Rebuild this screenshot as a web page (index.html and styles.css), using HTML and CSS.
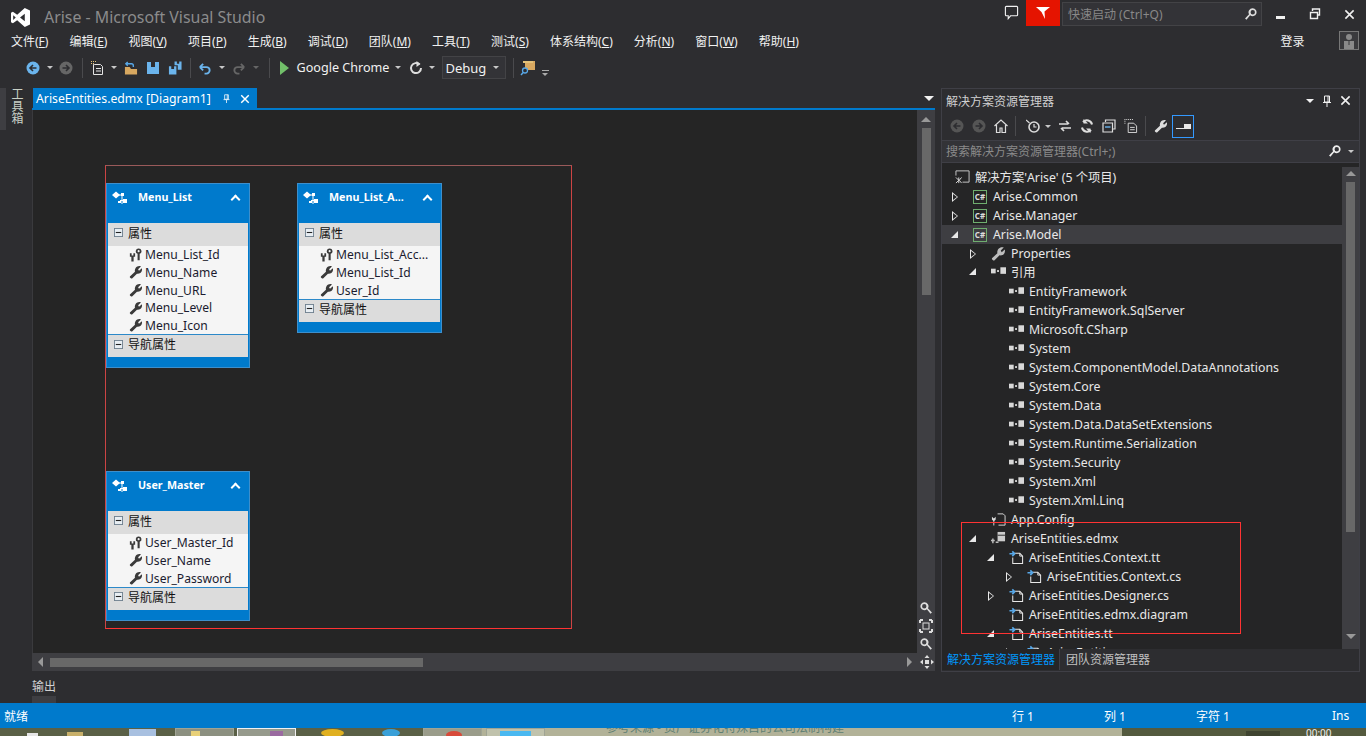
FILE: index.html
```html
<!DOCTYPE html>
<html lang="zh-CN">
<head>
<meta charset="utf-8">
<title>Arise - Microsoft Visual Studio</title>
<link rel="stylesheet" href="styles.css">
</head>
<body>
<svg class="sprite" aria-hidden="true">
  <symbol id="wrench" viewBox="0 0 16 16"><path d="M1 13 6.800 7.800C6.200 4.600 8.300 1.200 11.800 1.200c.8 0 1.300.1 1.800.4L10.400 4.800l1 1.900 3.300-2.900c1 3.400-1.800 7-5.600 6.100L3.500 15.500H2.500L1 14.200Z" fill="currentColor"/></symbol>
  <symbol id="key" viewBox="0 0 16 16"><path d="M11 .5a3.200 3.200 0 0 1 1.200 6.200V14h-2.400V6.700A3.200 3.200 0 0 1 11 .5Zm0 1.900a1.200 1.200 0 1 0 0 2.400 1.200 1.200 0 0 0 0-2.400Z" fill="currentColor" fill-rule="evenodd"/><path d="M1 6h2v2.500h2V6h2v4H5.300v5.500H2.700V10H1Z" fill="currentColor"/></symbol>
  <symbol id="entity" viewBox="0 0 16 16"><path d="M0 5 4 1.500 8 5 4 8.500Z M9 3h3v3H9Z M11 9h4v4h-4Z M6 11h3v2H6Z" fill="currentColor"/><path d="M10 5.500V14M6 5l5 0M8 10.500h4" stroke="currentColor" fill="none"/></symbol>
  <symbol id="collapse" viewBox="0 0 10 10"><rect x=".5" y=".5" width="9" height="9" fill="#e8eef3" stroke="#6e7f8e"/><path d="M2 5h6" stroke="#222" stroke-width="1.200"/></symbol>
  <symbol id="search" viewBox="0 0 16 16"><path d="M10 1.500a4.500 4.500 0 1 1-3 8L2.800 14.500 1.200 13 5.800 8.300A4.500 4.500 0 0 1 10 1.500Zm0 2a2.500 2.500 0 1 0 0 5 2.500 2.500 0 0 0 0-5Z" fill="currentColor" fill-rule="evenodd"/></symbol>
  <symbol id="filearrow" viewBox="0 0 16 16"><path d="M6 3.500h5.500l3 3v8H4V8" fill="none" stroke="#e8e8e8" stroke-width="1.100"/><path d="M11.500 3.500v3h3" fill="none" stroke="#e8e8e8"/><path d="M.5 4h5M3.500 1.500 6 4 3.500 6.500" fill="none" stroke="#58a8e8" stroke-width="1.800"/></symbol>
  <symbol id="ref" viewBox="0 0 16 16"><rect x="0" y="5" width="5" height="5" fill="#d8d8d8"/><rect x="6.500" y="6.500" width="2" height="2" fill="#d8d8d8"/><rect x="10" y="3.500" width="6" height="7" fill="#d8d8d8"/></symbol>
  <symbol id="circle-left" viewBox="0 0 14 14"><circle cx="7" cy="7" r="6.500" fill="currentColor"/><path d="M10.500 7h-6M7 4 4 7l3 3" fill="none" stroke="#2d2d30" stroke-width="1.600"/></symbol>
  <symbol id="circle-right" viewBox="0 0 14 14"><circle cx="7" cy="7" r="6.500" fill="currentColor"/><path d="M3.500 7h6M7 4l3 3-3 3" fill="none" stroke="#2d2d30" stroke-width="1.600"/></symbol>
  <symbol id="pin" viewBox="0 0 12 12"><path d="M3.500 1h5v6h-5ZM2 7.500h8M6 8v4M7 1v6" fill="none" stroke="currentColor"/></symbol>
  <symbol id="close" viewBox="0 0 12 12"><path d="m1.500 1.500 9 9m0-9-9 9" stroke="currentColor" stroke-width="1.700" fill="none"/></symbol>
</svg>

<div class="app">
  <header class="titlebar">
    <svg class="logo" viewBox="0 0 20 20"><path fill="#fff" fill-rule="evenodd" d="M14.500 0 20 2.600V17.400L14.500 20 6.500 12.800 2 16 0 15V5L2 4 6.500 7.200ZM14.500 6 9.500 10 14.500 14ZM2.300 7.500V12.500L5 10Z"/></svg>
    <div class="apptitle">Arise - Microsoft Visual Studio</div>
    <svg class="feedback" viewBox="0 0 16 16"><path d="M2.500 1.500h11a1 1 0 0 1 1 1v8a1 1 0 0 1-1 1H7l-2.500 3v-3h-2a1 1 0 0 1-1-1v-8a1 1 0 0 1 1-1Z" fill="none" stroke="#f0f0f0" stroke-width="1.200"/></svg>
    <div class="flag"><svg viewBox="0 0 14 14" width="14" height="14"><path d="M0 1h14L8.500 5.500 9 13 5.500 6Z" fill="#fff"/></svg></div>
    <div class="quick"><span>快速启动 (Ctrl+Q)</span><svg class="i14"><use href="#search"/></svg></div>
    <div class="winbtns">
      <span class="winmin"></span>
      <svg class="winrestore" viewBox="0 0 12 12"><path d="M3.500 3V1h7v6H8.500M1.500 4.500h7v6h-7Z" fill="none" stroke="#f0f0f0" stroke-width="1.400"/></svg>
      <svg class="winclose"><use href="#close"/></svg>
    </div>
  </header>

  <nav class="menubar">
    <span>文件(<u>F</u>)</span><span>编辑(<u>E</u>)</span><span>视图(<u>V</u>)</span><span>项目(<u>P</u>)</span><span>生成(<u>B</u>)</span><span>调试(<u>D</u>)</span><span>团队(<u>M</u>)</span><span>工具(<u>T</u>)</span><span>测试(<u>S</u>)</span><span>体系结构(<u>C</u>)</span><span>分析(<u>N</u>)</span><span>窗口(<u>W</u>)</span><span>帮助(<u>H</u>)</span>
    <span class="login">登录</span>
    <span class="avatar"><svg viewBox="0 0 18 17" width="18" height="17"><circle cx="9" cy="5" r="3" fill="#8a8a8a"/><path d="M4 9h10v8H4Z" fill="#8a8a8a"/><path d="M9 9v4" stroke="#3a3a3d"/></svg></span>
  </nav>

  <div class="toolbar">
    <span class="grip"></span>
    <svg class="t t-back"><use href="#circle-left"/></svg>
    <span class="caret c-1"></span>
    <svg class="t t-fwd"><use href="#circle-right"/></svg>
    <span class="sep s-1"></span>
    <svg class="t t-new" viewBox="0 0 14 16"><path d="M4.500 4.500h6l2 2v8h-9v-10Z M6 8.500h5M6 11h5" fill="none" stroke="#e4e4e4"/><path d="M1 1h1v1H1Zm2 0h1v1H3Zm2 0h1v1H5ZM1 3h1v1H1Zm2 0h1v1H3Z" fill="#e3c27a"/></svg>
    <span class="caret c-2"></span>
    <svg class="t t-open" viewBox="0 0 15 16"><path d="M1 7h5l1.500 2H14v6H1Z" fill="#d8a860"/><path d="M4 5.500 2 3.500 4 1.500M2.500 3.500H8a2 2 0 0 1 2 2V7" fill="none" stroke="#58a8e8" stroke-width="1.500"/></svg>
    <svg class="t t-save" viewBox="0 0 14 14"><path fill-rule="evenodd" d="M1 1h12v12H1ZM5 1v5h4V1Z" fill="#6bb4ec"/></svg>
    <svg class="t t-saveall" viewBox="0 0 15 15"><path fill-rule="evenodd" d="M1 5.500h8v9H1ZM3.500 5.500v3h3v-3Z" fill="#6bb4ec"/><path fill-rule="evenodd" d="M7 .5h7.500v9H10.500V4.500H7ZM9.500 .5v2.500h2.500V.5Z" fill="#6bb4ec"/></svg>
    <span class="sep s-2"></span>
    <svg class="t t-undo" viewBox="0 0 15 15"><path d="M2 6.500 5.500 10M2 6.500 5.500 3M2.500 6.500H9a3.500 3.500 0 0 1 0 7H7" fill="none" stroke="#6bb4ec" stroke-width="2"/></svg>
    <span class="caret c-3"></span>
    <svg class="t t-redo" viewBox="0 0 15 15"><path d="M13 6.500 9.500 10M13 6.500 9.500 3M12.500 6.500H6a3.500 3.500 0 0 0 0 7H8" fill="none" stroke="#666" stroke-width="2"/></svg>
    <span class="caret c-4 dim"></span>
    <span class="sep s-3"></span>
    <svg class="t t-play" viewBox="0 0 9 14"><path d="M0 0 9 7 0 14Z" fill="#72bf6a"/></svg>
    <span class="tb-label">Google Chrome</span>
    <span class="caret c-5"></span>
    <svg class="t t-refresh" viewBox="0 0 14 14"><path d="M10.500 3.500a5 5 0 1 0 1.500 3.500" fill="none" stroke="#ddd" stroke-width="2"/><path d="M7.500 0v6l4-3Z" fill="#ddd"/></svg>
    <span class="caret c-6"></span>
    <div class="combo"><span>Debug</span><span class="caret c-7"></span></div>
    <span class="sep s-4"></span>
    <svg class="t t-find" viewBox="0 0 15 16"><path d="M5 1h10v9H5Z" fill="#d8a860"/><path d="M3 1h10v2H3Z" fill="#e3c27a"/><circle cx="5" cy="10.500" r="2.500" fill="#2d2d30" stroke="#58a8e8" stroke-width="1.300"/><path d="M3.200 12.500 1 15" stroke="#58a8e8" stroke-width="1.500"/></svg>
    <span class="overflow"></span>
  </div>

  <main class="workspace">
    <aside class="sidestrip">
      <span class="side-mark"></span>
      <span class="side-text">工具箱</span>
    </aside>

    <section class="editor">
      <div class="tabs">
        <div class="tab"><span>AriseEntities.edmx [Diagram1]</span><svg class="i9"><use href="#pin"/></svg><svg class="i10"><use href="#close"/></svg></div>
        <span class="tabmenu"></span>
      </div>
      <div class="docbody">
        <div class="canvas">
          <div class="frame"></div>

          <article class="entity e-list">
            <div class="ehead"><svg class="eicon"><use href="#entity"/></svg><b>Menu_List</b><i class="chev"></i></div>
            <div class="esec"><svg class="ebox"><use href="#collapse"/></svg>属性</div>
            <ul class="props">
              <li><svg><use href="#key"/></svg>Menu_List_Id</li>
              <li><svg><use href="#wrench"/></svg>Menu_Name</li>
              <li><svg><use href="#wrench"/></svg>Menu_URL</li>
              <li><svg><use href="#wrench"/></svg>Menu_Level</li>
              <li><svg><use href="#wrench"/></svg>Menu_Icon</li>
            </ul>
            <div class="esec nav"><svg class="ebox"><use href="#collapse"/></svg>导航属性</div>
            <div class="efoot"></div>
          </article>

          <article class="entity e-acc">
            <div class="ehead"><svg class="eicon"><use href="#entity"/></svg><b>Menu_List_A...</b><i class="chev"></i></div>
            <div class="esec"><svg class="ebox"><use href="#collapse"/></svg>属性</div>
            <ul class="props">
              <li><svg><use href="#key"/></svg>Menu_List_Acc...</li>
              <li><svg><use href="#wrench"/></svg>Menu_List_Id</li>
              <li><svg><use href="#wrench"/></svg>User_Id</li>
            </ul>
            <div class="esec nav"><svg class="ebox"><use href="#collapse"/></svg>导航属性</div>
            <div class="efoot"></div>
          </article>

          <article class="entity e-user">
            <div class="ehead"><svg class="eicon"><use href="#entity"/></svg><b>User_Master</b><i class="chev"></i></div>
            <div class="esec"><svg class="ebox"><use href="#collapse"/></svg>属性</div>
            <ul class="props">
              <li><svg><use href="#key"/></svg>User_Master_Id</li>
              <li><svg><use href="#wrench"/></svg>User_Name</li>
              <li><svg><use href="#wrench"/></svg>User_Password</li>
            </ul>
            <div class="esec nav"><svg class="ebox"><use href="#collapse"/></svg>导航属性</div>
            <div class="efoot"></div>
          </article>
        </div>
        <div class="vscroll">
          <span class="arr-up"></span>
          <span class="vthumb"></span>
          <div class="zooms">
            <svg class="i14 zi flip"><use href="#search"/></svg>
            <svg class="zi" viewBox="0 0 14 14"><path d="M1 1h3M1 1v3M13 1h-3M13 1v3M1 13h3M1 13v-3M13 13h-3M13 13v-3" stroke="#ddd" stroke-width="2" fill="none"/><rect x="4" y="4" width="6" height="6" fill="none" stroke="#ddd"/></svg>
            <svg class="i14 zi flip"><use href="#search"/></svg>
          </div>
        </div>
      </div>
      <div class="hscroll">
        <span class="arr-left"></span>
        <span class="hthumb"></span>
        <span class="arr-right"></span>
        <svg class="move" viewBox="0 0 14 14"><path d="M7 0 9.500 3h-5ZM7 14l2.500-3h-5ZM0 7l3-2.500v5ZM14 7l-3-2.500v5Z" fill="#ddd"/><rect x="5" y="5" width="4" height="4" fill="#ddd"/></svg>
      </div>
    </section>

    <section class="explorer">
      <div class="ex-title">
        <span>解决方案资源管理器</span>
        <span class="ex-grip"></span>
        <span class="tabmenu small"></span>
        <svg class="i12"><use href="#pin"/></svg>
        <svg class="i11"><use href="#close"/></svg>
      </div>
      <div class="ex-tools">
        <svg class="x x-back"><use href="#circle-left"/></svg>
        <svg class="x x-fwd"><use href="#circle-right"/></svg>
        <svg class="x x-home" viewBox="0 0 14 14"><path d="M.5 7 7 1l6.500 6M2.500 6v7.500h3.500V9h2v4.500h3.500V6" fill="none" stroke="#ddd" stroke-width="1.200"/></svg>
        <span class="sep x-s1"></span>
        <svg class="x x-hist" viewBox="0 0 14 14"><circle cx="8" cy="8" r="5" fill="none" stroke="#ddd" stroke-width="1.600"/><path d="M8 5v3h2.500M0 1l3.500 3" stroke="#ddd" fill="none" stroke-width="1.200"/></svg>
        <span class="caret x-c"></span>
        <svg class="x x-sync" viewBox="0 0 14 14"><path d="M1 5h9M8 2l3 3M13 9H4M6 12 3 9" stroke="#ddd" stroke-width="1.700" fill="none"/></svg>
        <svg class="x x-ref" viewBox="0 0 14 14"><path d="M12 5.500A5.200 5.200 0 0 0 3 3M2 8.500A5.200 5.200 0 0 0 11 11" stroke="#ddd" stroke-width="2" fill="none"/><path d="M3.500 0v4.500H8ZM10.500 14V9.500H6Z" fill="#ddd"/></svg>
        <svg class="x x-col" viewBox="0 0 14 14"><path d="M3.500 3V1h9.500v9h-2M1 4h9.500v9H1Z" fill="none" stroke="#ddd" stroke-width="1.200"/><path d="M3 8h5.500" stroke="#6bb4ec" stroke-width="1.400"/></svg>
        <svg class="x x-all" viewBox="0 0 14 15"><path d="M4 4.500h6l3 3v7H4Z M6 9h5M6 11.500h5" fill="none" stroke="#ddd"/><path d="M0 0h1v1H0Zm2 0h1v1H2Zm2 0h1v1H4Zm2 0h1v1H6Zm2 0h1v1H8ZM0 2h1v1H0Zm0 2h1v1H0Z" fill="#ddd"/></svg>
        <span class="sep x-s2"></span>
        <svg class="x x-wr"><use href="#wrench"/></svg>
        <span class="x-active"><i></i></span>
      </div>
      <div class="ex-search">
        <span>搜索解决方案资源管理器(Ctrl+;)</span>
        <svg class="i14"><use href="#search"/></svg>
        <span class="caret s-caret"></span>
      </div>
      <div class="ex-treewrap">
        <div class="tree">
          <div class="row d0 cjk"><svg class="ic" viewBox="0 0 16 16"><path d="M1 7V2h14v12H8" fill="none" stroke="#ccc"/><path d="M1 9l3 3-3 3M4 9v6M7 9l-2.500 3L7 15" fill="none" stroke="#ddd"/></svg><span>解决方案'Arise' (5 个项目)</span></div>
          <div class="row d1"><i class="exp shut"></i><span class="cs">C#</span><span>Arise.Common</span></div>
          <div class="row d1"><i class="exp shut"></i><span class="cs">C#</span><span>Arise.Manager</span></div>
          <div class="row d1 sel"><i class="exp open"></i><span class="cs">C#</span><span>Arise.Model</span></div>
          <div class="row d2"><i class="exp shut"></i><svg class="ic gray"><use href="#wrench"/></svg><span>Properties</span></div>
          <div class="row d2 cjk"><i class="exp open"></i><svg class="ic"><use href="#ref"/></svg><span>引用</span></div>
          <div class="row d3"><i class="exp"></i><svg class="ic"><use href="#ref"/></svg><span>EntityFramework</span></div>
          <div class="row d3"><i class="exp"></i><svg class="ic"><use href="#ref"/></svg><span>EntityFramework.SqlServer</span></div>
          <div class="row d3"><i class="exp"></i><svg class="ic"><use href="#ref"/></svg><span>Microsoft.CSharp</span></div>
          <div class="row d3"><i class="exp"></i><svg class="ic"><use href="#ref"/></svg><span>System</span></div>
          <div class="row d3"><i class="exp"></i><svg class="ic"><use href="#ref"/></svg><span>System.ComponentModel.DataAnnotations</span></div>
          <div class="row d3"><i class="exp"></i><svg class="ic"><use href="#ref"/></svg><span>System.Core</span></div>
          <div class="row d3"><i class="exp"></i><svg class="ic"><use href="#ref"/></svg><span>System.Data</span></div>
          <div class="row d3"><i class="exp"></i><svg class="ic"><use href="#ref"/></svg><span>System.Data.DataSetExtensions</span></div>
          <div class="row d3"><i class="exp"></i><svg class="ic"><use href="#ref"/></svg><span>System.Runtime.Serialization</span></div>
          <div class="row d3"><i class="exp"></i><svg class="ic"><use href="#ref"/></svg><span>System.Security</span></div>
          <div class="row d3"><i class="exp"></i><svg class="ic"><use href="#ref"/></svg><span>System.Xml</span></div>
          <div class="row d3"><i class="exp"></i><svg class="ic"><use href="#ref"/></svg><span>System.Xml.Linq</span></div>
          <div class="row d2"><i class="exp"></i><svg class="ic" viewBox="0 0 16 16"><path d="M7 2h6l2 2v10H8" fill="none" stroke="#ddd"/><path d="M1 5l2 2 2-2v3L3.500 9.500v5h-1v-5L1 8Z" fill="#ddd"/></svg><span>App.Config</span></div>
          <div class="row d2"><i class="exp open"></i><svg class="ic" viewBox="0 0 16 16"><path d="M7 1h8v10H7Z" fill="#ccc"/><path d="M7 4.500h8" stroke="#2a2a2a"/><path d="M0 10h4M2 8v5M5 12h3" stroke="#bbb" stroke-width="1.600"/></svg><span>AriseEntities.edmx</span></div>
          <div class="row d3"><i class="exp open"></i><svg class="ic"><use href="#filearrow"/></svg><span>AriseEntities.Context.tt</span></div>
          <div class="row d4"><i class="exp shut"></i><svg class="ic"><use href="#filearrow"/></svg><span>AriseEntities.Context.cs</span></div>
          <div class="row d3"><i class="exp shut"></i><svg class="ic"><use href="#filearrow"/></svg><span>AriseEntities.Designer.cs</span></div>
          <div class="row d3"><i class="exp"></i><svg class="ic"><use href="#filearrow"/></svg><span>AriseEntities.edmx.diagram</span></div>
          <div class="row d3"><i class="exp open"></i><svg class="ic"><use href="#filearrow"/></svg><span>AriseEntities.tt</span></div>
          <div class="row d4"><i class="exp shut"></i><svg class="ic"><use href="#filearrow"/></svg><span>AriseEntities.cs</span></div>
          <div class="redbox"></div>
        </div>
        <div class="treescroll"><span class="arr-up"></span><span class="tthumb"></span><span class="arr-down"></span></div>
      </div>
      <div class="ex-tabs">
        <span class="ex-tab on">解决方案资源管理器</span>
        <span class="ex-tab">团队资源管理器</span>
      </div>
    </section>
  </main>

  <div class="outputrow"><span>输出</span><i></i></div>

  <footer class="status">
    <span class="st-main">就绪</span>
    <span class="st st-1">行 1</span>
    <span class="st st-2">列 1</span>
    <span class="st st-3">字符 1</span>
    <span class="st st-4">Ins</span>
  </footer>

  <div class="taskbar">
    <i class="tk a1"></i><i class="tk a2"></i><i class="tk a3"></i>
    <i class="tile t1"><b class="dot yellow"></b></i>
    <i class="tile t2"><b class="dot purple"></b></i>
    <i class="tk a4"></i><i class="tk a5"></i>
    <i class="tile t3"><b class="dot red"></b></i>
    <i class="tile t4"><b class="dot cyan"></b></i>
    <span class="bg-text">参考来源 - 资产证券化特殊目的公司法制构建</span>
    <i class="tk a6"></i>
    <span class="clock">00:00</span>
  </div>
</div>
</body>
</html>
```
FILE: styles.css
```css
* { box-sizing: border-box; }
html, body { margin: 0; padding: 0; height: 100%; overflow: hidden; background: #2d2d30; }
body { font-family: "Noto Sans", "Noto Sans CJK SC", sans-serif; font-size: 12px; color: #f1f1f1; }
.sprite { position: absolute; width: 0; height: 0; }
ul { list-style: none; margin: 0; padding: 0; }
.app { width: 1366px; height: 736px; display: flex; flex-direction: column; overflow: hidden; }

/* title bar */
.titlebar { height: 30px; display: flex; align-items: flex-start; flex: none; }
.logo { width: 19px; height: 19px; margin: 8px 0 0 11px; flex: none; }
.apptitle { margin: 7px 0 0 14px; font-size: 15.900px; line-height: 21px; color: #8b8b8c; width: 960px; white-space: nowrap; }
.feedback { width: 15px; height: 15px; margin: 5px 0 0 0; flex: none; }
.flag { width: 34px; height: 26px; margin-left: 7px; background: #e51400; display: flex; align-items: center; justify-content: center; flex: none; }
.quick { width: 200px; height: 24px; margin: 2px 0 0 2px; background: #333337; border: 1px solid #434346; display: flex; align-items: center; justify-content: space-between; padding: 0 3px 0 5px; color: #888; font-size: 12px; flex: none; }
.quick svg { color: #ddd; }
.i14 { width: 14px; height: 14px; flex: none; }
.winbtns { display: flex; align-items: center; height: 28px; flex: none; }
.winmin { width: 9px; height: 3px; background: #f0f0f0; margin: 6px 0 0 14px; }
.winrestore { width: 12px; height: 12px; margin-left: 24px; }
.winclose { width: 11px; height: 11px; margin-left: 23px; color: #f0f0f0; }

/* menu */
.menubar { height: 21px; display: flex; align-items: center; padding-left: 11px; gap: 21.100px; font-size: 12px; color: #f1f1f1; flex: none; white-space: nowrap; }
.menubar u { text-underline-offset: 1px; }
.login { margin-left: 460.600px; }
.avatar { margin-left: 13px; width: 20px; height: 19px; border: 1px solid #777; display: flex; align-items: center; justify-content: center; background: #3a3a3d; overflow: hidden; }

/* toolbar */
.toolbar { height: 25px; margin-top: 4px; display: flex; align-items: center; flex: none; padding-left: 13px; white-space: nowrap; }
.grip { width: 4px; height: 21px; margin-right: 9px; background: radial-gradient(circle, #5c5c5c 40%, transparent 45%) 0 0 / 2px 2px; }
.t { flex: none; width: 14px; height: 14px; }
.caret { display: block; width: 0; height: 0; border: 3.5px solid transparent; border-top: 3.5px solid #c8c8c8; border-bottom: 0; flex: none; }
.caret.dim { border-top-color: #666; }
.sep { display: block; width: 1px; height: 20px; background: #4a4a4d; flex: none; }
.t-back { color: #6bb4ec; }
.t-fwd { color: #666; }
.c-1 { margin-left: 7px; }
.t-fwd { margin-left: 6px; }
.s-1 { margin-left: 9px; }
.t-new { margin-left: 7px; height: 16px; }
.c-2 { margin-left: 7px; }
.t-open { margin-left: 6.500px; height: 16px; }
.t-save { margin-left: 8px; }
.t-saveall { margin-left: 8px; }
.s-2 { margin-left: 8px; }
.t-undo { margin-left: 7px; height: 16px; }
.c-3 { margin-left: 7.500px; }
.t-redo { margin-left: 6.500px; }
.c-4 { margin-left: 7.500px; }
.s-3 { margin-left: 9.500px; }
.t-play { margin-left: 10.500px; width: 9px; }
.tb-label { margin-left: 7.500px; font-size: 12.600px; width: 93px; color: #f1f1f1; }
.c-5 { margin-left: 5.500px; }
.t-refresh { margin-left: 7.500px; }
.c-6 { margin-left: 6.500px; }
.combo { margin-left: 6.500px; width: 64px; height: 23px; background: #333337; border: 1px solid #434346; display: flex; align-items: center; justify-content: space-between; padding: 0 6px 0 3px; font-size: 13px; flex: none; }
.s-4 { margin-left: 7px; }
.t-find { margin-left: 6.500px; width: 15px; height: 16px; }
.overflow { margin: 10px 0 0 7px; width: 7px; height: 6px; border-top: 1px solid #aaa; position: relative; }
.overflow::after { content: ""; position: absolute; left: 0; top: 2px; border: 3.500px solid transparent; border-top-color: #aaa; border-bottom: 0; }

/* workspace */
.workspace { margin-top: 8px; height: 584px; display: flex; flex: none; }
.sidestrip { width: 32px; flex: none; display: flex; align-items: flex-start; }
.side-mark { width: 6px; height: 42px; background: #3e3e42; }
.side-text { margin-left: 4px; writing-mode: vertical-rl; font-size: 12px; line-height: 13px; color: #c9d0c6; }

.editor { width: 903px; flex: none; display: flex; flex-direction: column; }
.tabs { height: 22px; border-bottom: 2px solid #007acc; display: flex; flex: none; position: relative; }
.tab { width: 224px; height: 20px; margin-left: 1px; background: #007acc; color: #fff; display: flex; align-items: center; padding: 1px 0 0 3px; font-size: 12.250px; white-space: nowrap; }
.i9 { width: 9px; height: 9px; margin-left: 11px; flex: none; }
.i10 { width: 10px; height: 10px; margin-left: 9.500px; flex: none; }
.tabmenu { width: 0; height: 0; border: 5px solid transparent; border-top: 5px solid #f1f1f1; border-bottom: 0; margin: 8px 0 0 667px; flex: none; }
.docbody { flex: none; height: 543px; display: flex; }
.canvas { width: 885px; background: #252525; position: relative; border-left: 1px solid #3a3a3d; flex: none; overflow: hidden; }
.frame { position: absolute; left: 72px; top: 55px; width: 467px; height: 464px; border: 1px solid #f33; border-top-color: #9a5a5a; border-left-color: #c44; border-right-color: #c44; }
.vscroll { width: 18px; background: #3e3e42; display: flex; flex-direction: column; align-items: center; flex: none; position: relative; }
.arr-up { display: block; width: 0; height: 0; border: 5px solid transparent; border-bottom: 5px solid #999; border-top: 0; flex: none; }
.arr-down { display: block; width: 0; height: 0; border: 5px solid transparent; border-top: 5px solid #999; border-bottom: 0; flex: none; }
.vscroll .arr-up { margin-top: 7px; }
.vthumb { display: block; width: 9px; height: 167px; background: #686868; margin-top: 6px; flex: none; }
.zooms { margin-top: 306px; display: flex; flex-direction: column; align-items: center; gap: 4px; color: #ddd; }
.zi { width: 14px; height: 14px; }
.flip { transform: scaleX(-1); }

.hscroll { height: 18px; background: #3e3e42; display: flex; align-items: center; flex: none; }
.arr-left { display: block; width: 0; height: 0; border: 5px solid transparent; border-right: 5px solid #999; border-left: 0; margin-left: 6px; flex: none; }
.hthumb { display: block; width: 373px; height: 9px; background: #686868; margin-left: 7px; flex: none; }
.arr-right { display: block; width: 0; height: 0; border: 5px solid transparent; border-left: 5px solid #999; border-right: 0; margin-left: 484px; flex: none; }
.move { width: 14px; height: 14px; margin-left: 8px; flex: none; }

/* entities */
.entity { position: absolute; width: 144px; background: #007acc; border: 1px solid #3d8fcc; color: #111; display: flex; flex-direction: column; padding: 0 1px; }
.e-list { left: 73px; top: 73px; }
.e-acc { left: 264px; top: 73px; width: 145px; }
.e-user { left: 73px; top: 361px; }
.ehead { height: 39px; display: flex; align-items: flex-start; color: #fff; padding: 4px 0 0 4px; flex: none; }
.ehead b { font-size: 10.700px; line-height: 18px; margin-left: 10px; flex: 1; white-space: nowrap; }
.eicon { width: 16px; height: 16px; margin-top: 2px; flex: none; color: #fff; }
.chev { width: 7px; height: 7px; border-left: 2px solid #fff; border-top: 2px solid #fff; transform: rotate(45deg); margin: 8px 9px 0 0; flex: none; }
.esec { height: 23px; background: #dcdcdc; display: flex; align-items: center; font-size: 12px; padding: 0 0 4px 6px; color: #111; flex: none; }
.ebox { width: 9px; height: 9px; margin-right: 5px; flex: none; }
.esec.nav { border-top: 1px solid #2c89c9; }
.props { background: #f5f5f5; padding: 0 0 0 21px; flex: none; }
.props li { height: 17.650px; display: flex; align-items: center; font-size: 12.100px; color: #1b1b2f; white-space: nowrap; overflow: hidden; }
.props svg { width: 14px; height: 14px; margin-right: 2px; color: #3a3a3a; flex: none; }
.efoot { height: 10px; flex: none; }

/* explorer */
.explorer { width: 419px; margin-left: 6px; border: 1px solid #3f3f46; display: flex; flex-direction: column; flex: none; position: relative; }
.ex-title { height: 23px; display: flex; align-items: center; padding-left: 4px; color: #d0d0d0; flex: none; }
.ex-grip { width: 235px; height: 5px; margin-left: 8px; background: radial-gradient(circle, #55555a 40%, transparent 45%) 0 0 / 2px 2px; }
.tabmenu.small { margin: 0 0 0 9px; border-width: 4px 4px 0; border-top-color: #f1f1f1; }
.i12 { width: 12px; height: 12px; margin-left: 7px; color: #f1f1f1; flex: none; }
.i11 { width: 11px; height: 11px; margin-left: 7px; color: #f1f1f1; flex: none; }
.ex-tools { height: 28px; display: flex; align-items: center; flex: none; padding-left: 8px; }
.x { width: 14px; height: 14px; flex: none; color: #ddd; }
.x-back, .x-fwd { color: #555; }
.x-fwd, .x-home { margin-left: 8px; }
.x-s1 { margin-left: 7px; }
.x-hist { margin-left: 10px; }
.x-c { margin-left: 5px; }
.x-sync { margin-left: 7px; }
.x-ref, .x-col, .x-all { margin-left: 8px; }
.x-s2 { margin-left: 7px; }
.x-wr { margin-left: 8px; }
.x-active { width: 22px; height: 23px; margin-left: 4px; border: 1px solid #3399ff; display: block; position: relative; flex: none; }
.x-active i { display: block; position: absolute; left: 3px; right: 2px; top: 12px; height: 1px; background: #e8e8e8; }
.x-active i::after { content: ""; position: absolute; right: 0; top: -4px; width: 7px; height: 5px; background: #e8e8e8; }
.ex-search { height: 23px; background: #333337; border-top: 1px solid #3f3f46; border-bottom: 1px solid #3f3f46; display: flex; align-items: center; padding: 0 5px 1px 4px; color: #8a8a8a; font-size: 12px; flex: none; }
.ex-search span:first-child { flex: 1; }
.ex-search svg { color: #eee; }
.s-caret { margin-left: 6px; }
.ex-treewrap { height: 486px; display: flex; flex: none; background: #252526; overflow: hidden; }
.tree { width: 400px; padding-top: 5px; flex: none; position: relative; overflow: hidden; }
.row { height: 19px; display: flex; align-items: center; font-size: 12.300px; color: #e8e8e8; white-space: nowrap; }
.row.sel { background: #3e3e42; }
.row.cjk { padding-bottom: 2px; }
.d0 { padding-left: 13px; }
.d1 { padding-left: 4px; }
.d2 { padding-left: 22px; }
.d3 { padding-left: 40px; }
.d4 { padding-left: 58px; }
.exp { width: 18px; height: 12px; flex: none; position: relative; display: block; }
.exp.shut::before { content: ""; position: absolute; left: 6px; top: 1px; border: 5px solid transparent; border-left: 6px solid #e8e8e8; border-right: 0; }
.exp.shut::after { content: ""; position: absolute; left: 7px; top: 3px; border: 3px solid transparent; border-left: 4px solid #252526; border-right: 0; }
.exp.open::before { content: ""; position: absolute; left: 5px; top: 2px; border-style: solid; border-width: 0 0 7px 7px; border-color: transparent transparent #e8e8e8 transparent; }
.ic { width: 15px; height: 15px; margin: 0 5px 0 9px; flex: none; color: #d8d8d8; }
.d0 .ic { margin-left: 0; }
.ic.gray { color: #bdbdbd; }
.cs { width: 14px; height: 14px; margin: 0 6px 0 9px; border: 1px solid #6fae6f; font-size: 8px; line-height: 12px; text-align: center; color: #ddd; font-weight: 700; flex: none; }
.redbox { position: absolute; left: 19px; top: 359px; width: 280px; height: 112px; border: 1px solid #f33; }
.treescroll { width: 17px; background: #3e3e42; display: flex; flex-direction: column; align-items: center; flex: none; margin-top: 4px; }
.treescroll .arr-up { margin-top: 4px; }
.tthumb { display: block; width: 9px; height: 350px; background: #686868; margin-top: 6px; flex: none; }
.treescroll .arr-down { margin-top: 102px; }
.ex-tabs { height: 21px; display: flex; align-items: flex-start; flex: none; }
.ex-tab { padding: 1px 5px 0 5px; line-height: 20px; color: #c0c0c0; font-size: 12px; height: 21px; }
.ex-tab.on { width: 118px; color: #0097fb; background: #252526; border-right: 1px solid #3f3f46; padding-left: 5px; margin-right: 1px; white-space: nowrap; }

/* output */
.outputrow { height: 31px; display: flex; flex-direction: column; padding-left: 32px; flex: none; font-size: 12px; color: #d0d0d0; }
.outputrow span { margin-top: 6px; line-height: 18px; }
.outputrow i { display: block; width: 24px; height: 7px; margin-top: auto; background: #3e3e42; }

/* status */
.status { height: 25px; background: #007acc; color: #fff; display: flex; align-items: center; padding-left: 4px; font-size: 12px; flex: none; white-space: nowrap; }
.st-main { width: 1008px; }
.st { display: block; }
.st-1, .st-2 { width: 92px; }
.st-3 { width: 136px; }

/* desktop strip */
.taskbar { height: 8px; flex: none; display: flex; overflow: hidden; background: linear-gradient(90deg, #5a6046 0 450px, #b2b298 450px 1122px, #545a3e 1122px); }
.tk { display: block; height: 8px; width: 12px; flex: none; margin-top: 3px; }
.a1 { margin-left: 27px; width: 11px; background: #e6e6e6; margin-top: 5px; }
.a2 { margin-left: 29px; width: 16px; background: #c8b06a; margin-top: 4px; }
.a3 { margin-left: 46px; width: 27px; background: #a8c0e0; margin-top: 1px; }
.tile { display: block; height: 8px; width: 59px; flex: none; background: #8c9080; border: 1px solid #a0a494; border-bottom: 0; position: relative; }
.t1 { margin-left: 19px; }
.t2 { margin-left: 3px; background: #969a8c; border-color: #f0f0f0; }
.dot { display: block; position: absolute; top: 2px; height: 8px; }
.yellow { left: 15px; width: 9px; background: #e8d078; }
.purple { left: 32px; width: 13px; background: #9a6aa0; }
.red { left: 22px; width: 16px; background: #d84a3a; border-radius: 50%; }
.cyan { left: 13px; width: 31px; background: #4ab8f0; }
.a4 { margin-left: 25px; width: 23px; background: #e0b020; border-radius: 50%; margin-top: 1px; }
.a5 { margin-left: 38px; width: 18px; background: #3aa0d8; border-radius: 50%; margin-top: 1px; }
.t3 { margin-left: 23px; background: #9a9c8a; }
.t4 { margin-left: 4px; background: #c0c2ac; }
.bg-text { margin: -7px 0 0 61px; width: 240px; font-size: 12px; line-height: 14px; color: #5f7f72; flex: none; white-space: nowrap; }
.a6 { margin-left: 400px; width: 34px; background: #3f4430; margin-top: 3px; }
.clock { margin: -1px 0 0 26px; font-size: 10px; line-height: 12px; color: #eee; flex: none; }
```
